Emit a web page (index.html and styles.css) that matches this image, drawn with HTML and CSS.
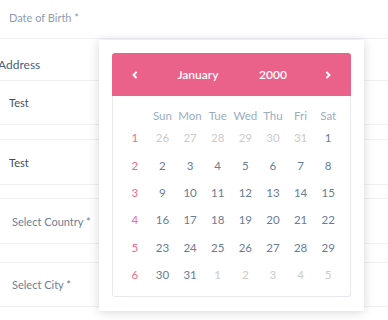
FILE: index.html
```html
<!DOCTYPE html>
<html lang="en">
<head>
    <meta charset="UTF-8">
    <meta name="viewport" content="width=device-width, initial-scale=1.0">
    <title>Date of Birth</title>
    <link rel="stylesheet" href="styles.css">
</head>
<body>
    <!-- Formulario -->
    <div class="form">
        <div class="dob-row">Date of Birth *</div>
        <div class="section-title">Address</div>

        <div class="field">Test</div>
        <div class="field field-2">Test</div>
        <div class="field field-select field-3">Select Country *</div>
        <div class="field field-select field-4">Select City *</div>
    </div>

    <!-- Calendario desplegable -->
    <div class="popup">
        <div class="calendar">
            <div class="cal-header">
                <span class="nav">
                    <svg width="6" height="8" viewBox="0 0 6 8"><polyline points="4.6,0.9 1.6,4 4.6,7.1" fill="none" stroke="#fff" stroke-width="2"/></svg>
                </span>
                <span class="month">January</span>
                <span class="year">2000</span>
                <span></span>
                <span class="nav">
                    <svg width="6" height="8" viewBox="0 0 6 8"><polyline points="1.4,0.9 4.4,4 1.4,7.1" fill="none" stroke="#fff" stroke-width="2"/></svg>
                </span>
            </div>
            <div class="cal-body" id="dias">
                <span></span>
                <span class="wd">Sun</span>
                <span class="wd">Mon</span>
                <span class="wd">Tue</span>
                <span class="wd">Wed</span>
                <span class="wd">Thu</span>
                <span class="wd">Fri</span>
                <span class="wd">Sat</span>
            </div>
        </div>
    </div>

    <script>
// Dias del mes (enero 2000 empieza en sabado)
const cuerpo = document.getElementById('dias');
let dia = 26;
let mes = -1;
for (let semana = 1; semana <= 6; semana++) {
    const num = document.createElement('span');
    num.className = 'week';
    num.textContent = semana;
    cuerpo.appendChild(num);
    for (let d = 0; d < 7; d++) {
        const celda = document.createElement('span');
        celda.textContent = dia;
        celda.className = mes === 0 ? 'day' : 'day other';
        cuerpo.appendChild(celda);
        dia++;
        if (mes === -1 && dia > 31) { dia = 1; mes = 0; }
        else if (mes === 0 && dia > 31) { dia = 1; mes = 1; }
    }
}
</script>
</body>
</html>
```

FILE: styles.css
```css
/* Estilos básicos */
body {
    margin: 0;
    background-color: #fff;
    font-family: Lato, "Open Sans", sans-serif;
    position: relative;
    height: 320px;
    overflow: hidden;
}

/* Filas del formulario */
.dob-row {
    height: 39px;
    box-sizing: border-box;
    padding: 11px 0 0 9px;
    font-size: 11px;
    line-height: 14px;
    color: #8e9db1;
    border-bottom: 1px solid #eef0f3;
}

.section-title {
    height: 41px;
    box-sizing: border-box;
    padding: 18px 0 0 0;
    margin-left: -2px;
    font-size: 12px;
    line-height: 15px;
    color: #4a6180;
}

.field {
    height: 45px;
    box-sizing: border-box;
    display: flex;
    align-items: center;
    padding-left: 9px;
    font-size: 11px;
    color: #3c4f66;
    border-top: 1px solid #eef0f3;
    border-bottom: 1px solid #eef0f3;
}

.field-2 {
    margin-top: 14px;
    height: 46px;
}

.field-3 {
    margin-top: 13px;
    height: 46px;
}

.field-4 {
    margin-top: 18px;
}

.field-select {
    padding-left: 12px;
    color: #6b7f97;
}

/* Desplegable del calendario */
.popup {
    position: absolute;
    left: 99px;
    top: 40px;
    width: 265px;
    height: 271px;
    box-sizing: border-box;
    padding: 13px;
    background-color: #fff;
    box-shadow: 0 1px 10px rgba(0, 0, 0, 0.16);
}

.cal-header {
    height: 43px;
    display: grid;
    grid-template-columns: 28px 98px 52px 1fr 28px;
    align-items: center;
    padding: 0 9px;
    background-color: #ea6189;
    border-radius: 3px 3px 0 0;
    color: #fff;
    font-size: 12px;
    font-weight: 600;
}

.cal-header span {
    text-align: center;
}

.nav {
    display: flex;
    justify-content: center;
}

.cal-body {
    display: grid;
    grid-template-columns: repeat(8, 1fr);
    grid-template-rows: 18px repeat(6, 27.4px);
    padding: 10px 8px 8px;
    border: 1px solid #e6eaf0;
    border-top: none;
    border-radius: 0 0 3px 3px;
    font-size: 11.5px;
}

.cal-body span {
    display: flex;
    align-items: center;
    justify-content: center;
}

.wd {
    color: #9badc2;
}

.week {
    color: #ee6c93;
}

.day {
    color: #6b7c94;
}

.day.other {
    color: #cbcbcb;
}
```
